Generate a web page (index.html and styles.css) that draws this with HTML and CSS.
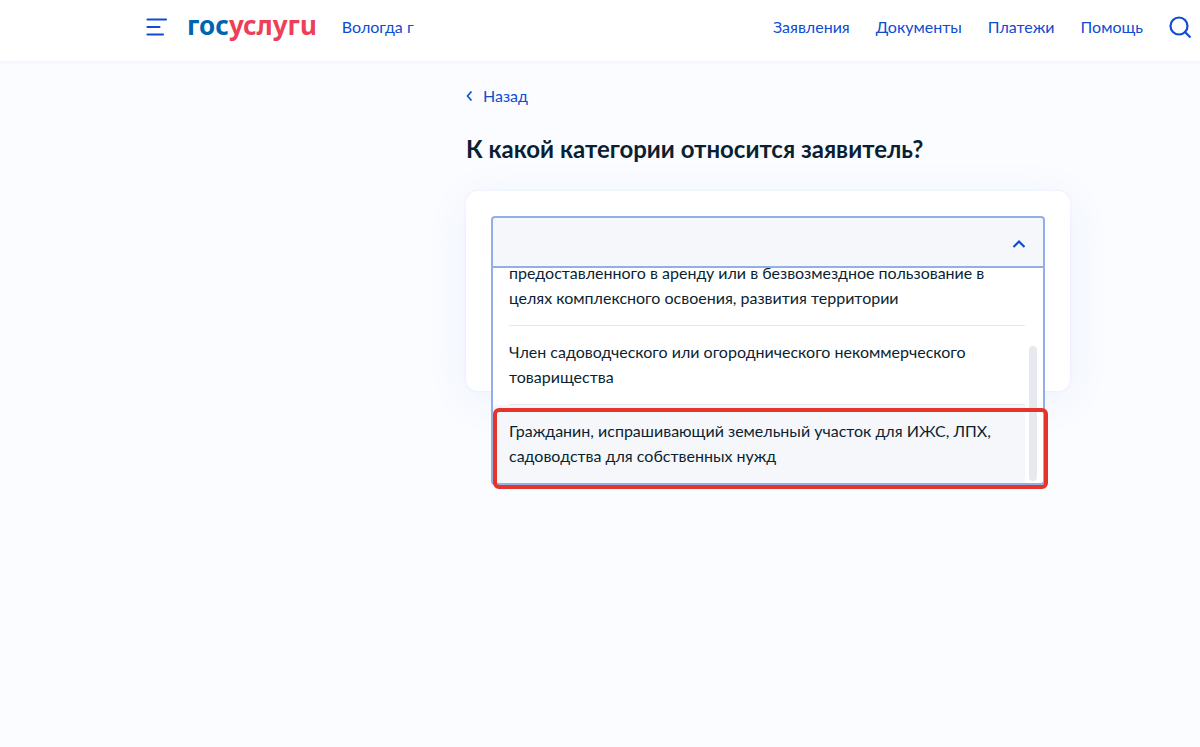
FILE: index.html
```html
<!DOCTYPE html>
<html lang="ru">
<head>
  <meta charset="utf-8">
  <meta name="viewport" content="width=device-width, initial-scale=1">
  <title>Госуслуги</title>
  <link rel="stylesheet" href="styles.css">
</head>
<body>
  <header class="header">
    <button class="icon-button" type="button" aria-label="Меню">
      <svg width="22" height="18" viewBox="0 0 22 18" fill="none" stroke="currentColor" stroke-width="2.200" stroke-linecap="round">
        <path d="M1.500 1.500h18.500M1.500 9h12M1.500 16.500h15.500"/>
      </svg>
    </button>
    <a class="logo" href="#" aria-label="Госуслуги"><span class="logo-blue">гос</span><span class="logo-red">услугu</span></a>
    <a class="header-link" href="#">Вологда г</a>
    <nav class="nav">
      <a class="header-link" href="#">Заявления</a>
      <a class="header-link" href="#">Документы</a>
      <a class="header-link" href="#">Платежи</a>
      <a class="header-link" href="#">Помощь</a>
    </nav>
    <button class="icon-button" type="button" aria-label="Поиск">
      <svg width="22" height="22" viewBox="0 0 22 22" fill="none" stroke="currentColor" stroke-width="2.200">
        <circle cx="10" cy="10" r="8.500"/>
        <path d="M15.500 15.500l6 6"/>
      </svg>
    </button>
  </header>

  <main class="main">
    <a class="back-link" href="#">
      <svg width="7" height="10" viewBox="0 0 7 10" fill="none" stroke="currentColor" stroke-width="1.600">
        <path d="M5.500 0.500L1.500 5l4 4.500"/>
      </svg>
      Назад
    </a>
    <h1 class="title" id="title">К какой категории относится заявитель?</h1>

    <section class="card">
      <div class="dropdown">
        <button class="dropdown-field" type="button" aria-haspopup="listbox" aria-expanded="true" aria-labelledby="title">
          <svg width="14" height="10" viewBox="0 0 14 10" fill="none" stroke="currentColor" stroke-width="2.200">
            <path d="M1.500 8L7 2.500 12.500 8"/>
          </svg>
        </button>
        <div class="dropdown-menu">
          <ul class="options" role="listbox" aria-labelledby="title">
            <li class="option" role="option">предоставленного в аренду или в безвозмездное пользование в целях комплексного освоения, развития территории</li>
            <li class="option" role="option">Член садоводческого или огороднического некоммерческого товарищества</li>
            <li class="option active" role="option" aria-selected="true">Гражданин, испрашивающий земельный участок для ИЖС, ЛПХ, садоводства для собственных нужд</li>
          </ul>
          <div class="scrollbar"></div>
          <div class="highlight"></div>
        </div>
      </div>
    </section>
  </main>
</body>
</html>
```
FILE: styles.css
```css
:root {
  --blue: #0d4cd3;
  --logo-blue: #0065b1;
  --logo-red: #ee3f58;
  --text: #0b1f33;
  --border: #94afe8;
  --field: #f5f7fb;
  --line: #e4e8ec;
  --mark: #e5352b;
  --font: Lato, "Open Sans", sans-serif;
}

* {
  box-sizing: border-box;
  margin: 0;
  padding: 0;
}

body {
  min-height: 100vh;
  font-family: var(--font);
  font-size: 16px;
  line-height: 24px;
  color: var(--text);
  background: #fafcff;
}

a {
  color: var(--blue);
  text-decoration: none;
}

.header {
  display: flex;
  align-items: center;
  height: 61px;
  padding: 0 9px 8px 146px;
  background: #fff;
  box-shadow: 0 1px 3px rgba(13, 76, 211, 0.06);
}

.icon-button {
  display: flex;
  border: none;
  background: none;
  color: var(--blue);
  cursor: pointer;
}

.logo {
  margin: 0 25px 0 19px;
  padding-bottom: 4px;
  font-family: "Noto Sans", sans-serif;
  font-size: 26px;
  font-weight: 700;
  line-height: 32px;
}

.logo-blue {
  color: var(--logo-blue);
}

.logo-red {
  color: var(--logo-red);
}

.nav {
  display: flex;
  gap: 26px;
  margin: 0 26px 0 auto;
}

.main {
  padding: 22px 130px 24px 466px;
}

.back-link {
  display: inline-flex;
  align-items: center;
  gap: 10px;
}

.title {
  margin: 24px 0 25px;
  font-size: 24px;
  font-weight: 700;
  line-height: 34px;
}

.card {
  min-height: 200px;
  padding: 25px;
  background: #fff;
  border-radius: 12px;
  box-shadow: 0 0 3px rgba(13, 76, 211, 0.08), 0 8px 48px rgba(13, 76, 211, 0.06);
}

.dropdown {
  position: relative;
}

.dropdown-field {
  display: flex;
  align-items: center;
  justify-content: flex-end;
  width: 100%;
  height: 52px;
  padding: 4px 17px 0;
  border: 2px solid var(--border);
  border-radius: 4px 4px 0 0;
  background: var(--field);
  color: var(--blue);
  cursor: pointer;
}

.dropdown-menu {
  position: absolute;
  top: 52px;
  left: 0;
  width: 100%;
  border: 2px solid var(--border);
  border-top: none;
  border-radius: 0 0 4px 4px;
  background: #fff;
}

/* list is scrolled to its end */
.options {
  display: flex;
  flex-direction: column;
  justify-content: flex-end;
  height: 215px;
  padding-right: 18px;
  overflow: hidden;
  list-style: none;
}

.option {
  position: relative;
  flex: none;
  padding: 13px 16px 16px;
  line-height: 25px;
}

.option::after {
  content: "";
  position: absolute;
  right: 0;
  bottom: 0;
  left: 16px;
  height: 1px;
  background: var(--line);
}

.option.active {
  padding-bottom: 15px;
  background: var(--field);
}

.option.active::after {
  display: none;
}

.scrollbar {
  position: absolute;
  right: 6px;
  bottom: 2px;
  width: 8px;
  height: 135px;
  border-radius: 4px;
  background: #e6eaee;
}

.highlight {
  position: absolute;
  right: -5px;
  bottom: -6px;
  left: 0;
  height: 81px;
  border: 4px solid var(--mark);
  border-radius: 6px;
}
```
